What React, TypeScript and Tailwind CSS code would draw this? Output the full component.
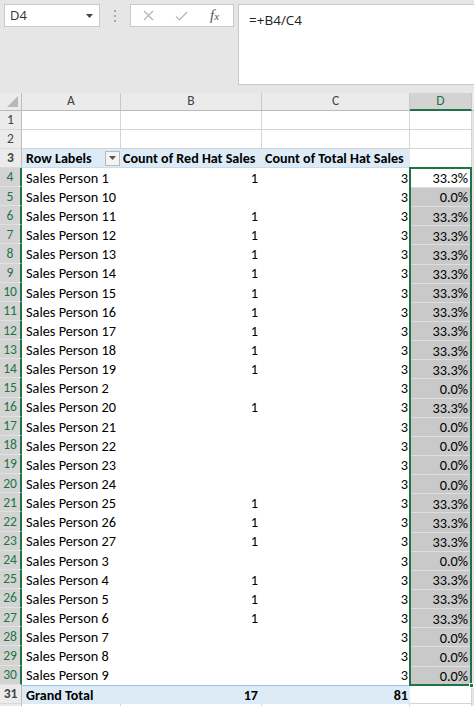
import React from "react";

type Row = { label: string; red?: string; total?: string; pct?: string };

const people: [string, boolean][] = [
  ["1", true], ["10", false], ["11", true], ["12", true], ["13", true], ["14", true],
  ["15", true], ["16", true], ["17", true], ["18", true], ["19", true], ["2", false],
  ["20", true], ["21", false], ["22", false], ["23", false], ["24", false], ["25", true],
  ["26", true], ["27", true], ["3", false], ["4", true], ["5", true], ["6", true],
  ["7", false], ["8", false], ["9", false],
];

const rows: Row[] = people.map(([n, hit]) => ({
  label: `Sales Person ${n}`,
  red: hit ? "1" : "",
  total: "3",
  pct: hit ? "33.3%" : "0.0%",
}));

// column widths: row header 22, A 99, B 141, C 148, D 62
const ROW = "flex h-[19.15px] shrink-0";
const LINE = "border-[#d4d4d4]";

function RowHeader({ n, active }: { n?: number; active?: boolean }) {
  if (active) {
    return (
      <div className="flex w-[22px] shrink-0 items-center justify-center bg-[#d3d3d3] border-r-2 border-r-[#217346] border-b border-b-[#e1e1e1] pt-[1px] text-[13.5px] text-[#217346]">
        {n}
      </div>
    );
  }
  return (
    <div className="flex w-[22px] shrink-0 items-center justify-center bg-[#ebebeb] border-r border-r-[#bcbcbc] border-b border-b-[#d9d9d9] pt-[1px] text-[13.5px] text-[#444]">
      {n}
    </div>
  );
}

function PlainRow({ n }: { n?: number }) {
  return (
    <div className={ROW}>
      <RowHeader n={n} />
      <div className={`w-[99px] bg-white border-r border-b ${LINE}`} />
      <div className={`w-[141px] bg-white border-r border-b ${LINE}`} />
      <div className={`w-[148px] bg-white border-r border-b ${LINE}`} />
      <div className={`w-[62px] bg-white border-r border-b ${LINE}`} />
      <div className="flex-1 bg-[#e6e6e6]" />
    </div>
  );
}

function FilterButton() {
  return (
    <span className="ml-auto mr-[1px] flex h-[15px] w-[15px] items-center justify-center border border-[#b8b8b8] bg-[#f4f4f4]">
      <svg width="7" height="4" viewBox="0 0 7 4">
        <path d="M0 0h7L3.5 4z" fill="#555" />
      </svg>
    </span>
  );
}

export default function App() {
  return (
    <div className="flex h-[706px] w-[474px] flex-col overflow-hidden bg-[#e6e6e6] font-['Carlito','Calibri','Lato',sans-serif] text-black">
      {/* formula bar */}
      <div className="flex h-[93px] shrink-0 items-start pt-[4px] pl-[4px]">
        <div className="flex h-[23px] w-[96px] items-center justify-between border border-[#c8c8c8] bg-white pl-[5px] pr-[6px] font-['Open_Sans',sans-serif] text-[13px] text-[#333]">
          <span>D4</span>
          <svg width="7" height="4" viewBox="0 0 7 4">
            <path d="M0 0h7L3.5 4z" fill="#444" />
          </svg>
        </div>
        <div className="flex h-[23px] w-[30px] flex-col items-center justify-center gap-[3px]">
          <span className="h-[2px] w-[2px] bg-[#a8a8a8]" />
          <span className="h-[2px] w-[2px] bg-[#a8a8a8]" />
          <span className="h-[2px] w-[2px] bg-[#a8a8a8]" />
        </div>
        <div className="flex h-[23px] w-[104px] items-center border border-[#c8c8c8] bg-white pl-[12px]">
          <svg width="11" height="11" viewBox="0 0 11 11">
            <path d="M1 1l9 9M10 1l-9 9" stroke="#b4b4b4" strokeWidth="1.2" />
          </svg>
          <svg className="ml-[21px]" width="13" height="10" viewBox="0 0 13 10">
            <path d="M1 5.5l3.5 3.5L12 1" stroke="#b4b4b4" strokeWidth="1.2" fill="none" />
          </svg>
          <span className="ml-[22px] font-['Liberation_Serif',serif] text-[15px] italic text-[#555]">
            f<span className="text-[11px]">x</span>
          </span>
        </div>
        <div className="ml-[4px] h-[81px] flex-1 border border-r-0 border-[#c8c8c8] bg-white pl-[10px] pt-[5px] font-['Open_Sans',sans-serif] text-[13.5px] text-[#222]">
          =+B4/C4
        </div>
      </div>

      {/* sheet */}
      <div className="relative flex flex-col">
        {/* column headers */}
        <div className="flex h-[17.5px] shrink-0 bg-[#ebebeb] text-[13.5px] text-[#444]">
          <div className="relative w-[22px] border-r border-b border-[#bcbcbc]">
            <svg className="absolute right-[3px] bottom-[3px]" width="11" height="11" viewBox="0 0 11 11">
              <path d="M11 0v11H0z" fill="#b8b8b8" />
            </svg>
          </div>
          <div className="flex w-[99px] items-center justify-center border-r border-b border-[#c8c8c8] border-b-[#bcbcbc]">A</div>
          <div className="flex w-[141px] items-center justify-center border-r border-b border-[#c8c8c8] border-b-[#bcbcbc]">B</div>
          <div className="flex w-[148px] items-center justify-center border-r border-b border-[#c8c8c8] border-b-[#bcbcbc]">C</div>
          <div className="flex w-[62px] items-center justify-center bg-[#d3d3d3] border-r border-r-[#c8c8c8] border-b-2 border-b-[#217346] text-[#217346]">D</div>
          <div className="flex-1 border-b border-[#bcbcbc]" />
        </div>

        <PlainRow n={1} />
        <PlainRow n={2} />

        {/* pivot header */}
        <div className={`${ROW} text-[14.1px] font-bold`}>
          <RowHeader n={3} />
          <div className="flex w-[99px] items-center bg-[#ddebf7] border-b border-[#c5dcf0] pl-[4px] pt-[1px]">
            Row Labels
            <FilterButton />
          </div>
          <div className="flex w-[141px] items-center overflow-hidden whitespace-nowrap bg-[#ddebf7] border-b border-[#c5dcf0] pl-[2px] pt-[2px]">
            Count of Red Hat Sales
          </div>
          <div className="flex w-[148px] items-center overflow-hidden whitespace-nowrap bg-[#ddebf7] border-b border-[#c5dcf0] pl-[3px] pt-[2px]">
            Count of Total Hat Sales
          </div>
          <div className={`w-[62px] bg-white border-r border-b ${LINE}`} />
          <div className="flex-1 bg-[#e6e6e6]" />
        </div>

        {rows.map((r, i) => {
          const n = i + 4;
          return (
            <div key={n} className={`${ROW} text-[14.3px]`}>
              <RowHeader n={n} active />
              <div className="flex w-[99px] items-center overflow-hidden whitespace-nowrap bg-white pl-[4px] pt-[2px]">{r.label}</div>
              <div className="flex w-[141px] items-center justify-end bg-white pr-[4px] pt-[2px]">{r.red}</div>
              <div className="flex w-[148px] items-center justify-end bg-white pr-[2px] pt-[2px]">{r.total}</div>
              {n === 4 ? (
                <div className="flex w-[62px] items-center justify-end bg-white pr-[4px] pt-[2px]">{r.pct}</div>
              ) : (
                <div className="flex w-[62px] items-center justify-end bg-[#c9c9c9] border-t border-[#dedede] pr-[4px] pt-[2px]">{r.pct}</div>
              )}
              <div className="flex-1 bg-[#e6e6e6]" />
            </div>
          );
        })}

        {/* grand total */}
        <div className={`${ROW} text-[14.1px] font-bold`}>
          <RowHeader n={31} />
          <div className="flex w-[99px] items-center bg-[#ddebf7] border-t border-[#9bc2e6] pl-[4px] pt-[1px]">Grand Total</div>
          <div className="flex w-[141px] items-center justify-end bg-[#ddebf7] border-t border-[#9bc2e6] pr-[4px] pt-[1px]">17</div>
          <div className="flex w-[148px] items-center justify-end bg-[#ddebf7] border-t border-[#9bc2e6] pr-[2px] pt-[1px]">81</div>
          <div className={`w-[62px] bg-white border-r border-b ${LINE}`} />
          <div className="flex-1 bg-[#e6e6e6]" />
        </div>

        <PlainRow />

        {/* selection D4:D30 */}
        <div className="pointer-events-none absolute left-[409px] top-[74px] h-[519px] w-[63px] border-2 border-[#217346]">
          <span className="absolute -right-[4px] -bottom-[4px] h-[5px] w-[5px] border border-white bg-[#217346]" />
        </div>
      </div>
    </div>
  );
}
